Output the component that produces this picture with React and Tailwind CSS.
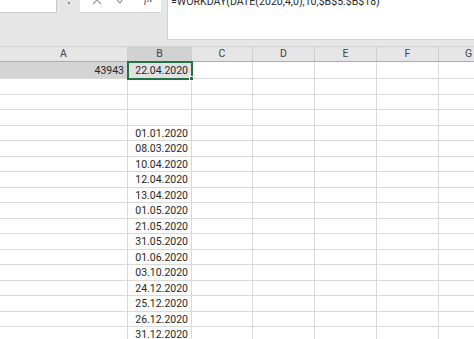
import React from "react";

// Spalten wie im Excel-Ausschnitt (Breite in px)
const columns = [
  { key: "A", w: "w-[128px]" },
  { key: "B", w: "w-[64px]" },
  { key: "C", w: "w-[61px]" },
  { key: "D", w: "w-[62px]" },
  { key: "E", w: "w-[62px]" },
  { key: "F", w: "w-[62px]" },
  { key: "G", w: "w-[60px]" },
];

// Feiertage in B5:B18
const dates = [
  "01.01.2020",
  "08.03.2020",
  "10.04.2020",
  "12.04.2020",
  "13.04.2020",
  "01.05.2020",
  "21.05.2020",
  "31.05.2020",
  "01.06.2020",
  "03.10.2020",
  "24.12.2020",
  "25.12.2020",
  "26.12.2020",
  "31.12.2020",
];

const FormulaBar = () => (
  <div className="h-[46px] bg-[#e6e6e6] flex items-start">
    {/* Namenfeld */}
    <div className="w-[57px] h-[13px] bg-white border-r border-b border-[#c8c8c8]"></div>
    <div className="w-[23px] h-[13px] flex justify-center">
      <span className="w-[2px] h-[2px] bg-[#8a8a8a] mt-[2px]"></span>
    </div>
    {/* Abbrechen / Eingeben / fx */}
    <div className="w-[81px] h-[13px] bg-white border-b border-[#d0d0d0] flex items-start overflow-hidden text-[#9a9a9a]">
      <svg width="10" height="10" viewBox="0 0 10 10" className="ml-[12px] -mt-[5px]">
        <path d="M1 1 L9 9 M9 1 L1 9" stroke="currentColor" strokeWidth="1.2" fill="none" />
      </svg>
      <svg width="10" height="10" viewBox="0 0 10 10" className="ml-[14px] -mt-[5px]">
        <path d="M1 5 L4 8 L9 1" stroke="currentColor" strokeWidth="1.2" fill="none" />
      </svg>
      <span className="ml-[18px] -mt-[8px] text-[12px] italic text-[#555] leading-none font-['Liberation_Serif',serif]">fx</span>
    </div>
    {/* Bearbeitungsleiste */}
    <div className="ml-[6px] flex-1 h-[40px] bg-white border-l border-b border-[#d0d0d0] overflow-hidden">
      <div className="-mt-[5px] ml-[3px] text-[10.6px] leading-[14px] text-[#2a2a2a] whitespace-nowrap">
        =WORKDAY(DATE(2020,4,0),10,$B$5:$B$18)
      </div>
    </div>
  </div>
);

const HeaderRow = () => (
  <div className="h-[16px] flex bg-[#e6e6e6] border-t border-[#d0d0d0] border-b border-b-[#ababab] text-[10.5px] text-[#444]">
    {columns.map((c) => (
      <div
        key={c.key}
        className={`${c.w} shrink-0 flex items-center justify-center border-r border-[#cfcfcf] ${
          c.key === "B" ? "bg-[#d2d2d2]" : ""
        }`}
      >
        {c.key}
      </div>
    ))}
  </div>
);

const Row = ({ h, a, b, first }) => (
  <div className={`${h} flex border-b border-[#d9d9d9] text-[10.5px] text-[#262626]`}>
    {columns.map((c) => {
      let content = null;
      let extra = "";
      if (c.key === "A") {
        content = a;
        if (first) extra = "bg-[#d4d4d4]";
      }
      if (c.key === "B") {
        content = b;
        if (first) extra = "bg-[#e2e2e2] relative";
      }
      return (
        <div
          key={c.key}
          className={`${c.w} shrink-0 flex items-center justify-end pt-[1px] pr-[3px] border-r border-[#d9d9d9] ${extra}`}
        >
          {content}
          {first && c.key === "B" && (
            <>
              <div className="absolute -left-[1px] -top-[1px] w-[66px] h-[19px] border-2 border-[#217346]"></div>
              <div className="absolute -right-[3px] -bottom-[3px] w-[5px] h-[5px] bg-[#217346] border border-white"></div>
            </>
          )}
        </div>
      );
    })}
  </div>
);

export default function App() {
  // Zeilenhöhen abwechselnd 16/15 px, erste Zeile etwas höher
  const rows = [{ a: "43943", b: "22.04.2020", first: true }];
  for (let i = 0; i < 3; i++) rows.push({ a: "", b: "" });
  dates.forEach((d) => rows.push({ a: "", b: d }));

  return (
    <div className="w-[474px] h-[339px] overflow-hidden bg-white font-['Roboto',sans-serif]">
      <FormulaBar />
      <HeaderRow />
      {rows.map((r, i) => (
        <Row
          key={i}
          h={i === 0 ? "h-[17px]" : i % 2 === 1 ? "h-[16px]" : "h-[15px]"}
          a={r.a}
          b={r.b}
          first={r.first}
        />
      ))}
    </div>
  );
}
